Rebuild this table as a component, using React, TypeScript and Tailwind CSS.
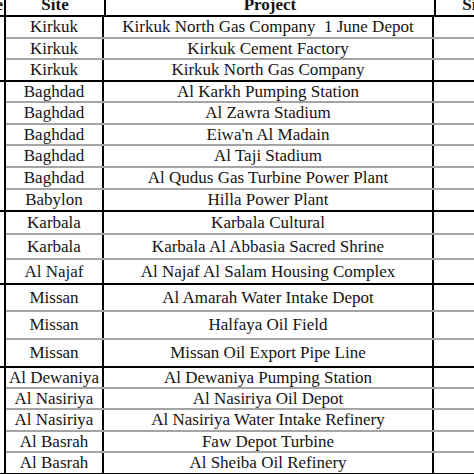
const groups = [
  {
    rows: [
      { site: "Kirkuk", project: "Kirkuk North Gas Company  1 June Depot", h: "h-[22px]" },
      { site: "Kirkuk", project: "Kirkuk Cement Factory", h: "h-[21px]" },
      { site: "Kirkuk", project: "Kirkuk North Gas Company", h: "h-[22px]" },
    ],
  },
  {
    rows: [
      { site: "Baghdad", project: "Al Karkh Pumping Station", h: "h-[21px]" },
      { site: "Baghdad", project: "Al Zawra Stadium", h: "h-[22px]" },
      { site: "Baghdad", project: "Eiwa'n Al Madain", h: "h-[21px]" },
      { site: "Baghdad", project: "Al Taji Stadium", h: "h-[22px]" },
      { site: "Baghdad", project: "Al Qudus Gas Turbine Power Plant", h: "h-[22px]" },
      { site: "Babylon", project: "Hilla Power Plant", h: "h-[22px]" },
    ],
  },
  {
    rows: [
      { site: "Karbala", project: "Karbala Cultural", h: "h-[23px]" },
      { site: "Karbala", project: "Karbala Al Abbasia Sacred Shrine", h: "h-[25px]" },
      { site: "Al Najaf", project: "Al Najaf Al Salam Housing Complex", h: "h-[25px]" },
    ],
  },
  {
    rows: [
      { site: "Missan", project: "Al Amarah Water Intake Depot", h: "h-[27px]" },
      { site: "Missan", project: "Halfaya Oil Field", h: "h-[28px]" },
      { site: "Missan", project: "Missan Oil Export Pipe Line", h: "h-[28px]" },
    ],
  },
  {
    rows: [
      { site: "Al Dewaniya", project: "Al Dewaniya Pumping Station", h: "h-[21px]" },
      { site: "Al Nasiriya", project: "Al Nasiriya Oil Depot", h: "h-[21px]" },
      { site: "Al Nasiriya", project: "Al Nasiriya Water Intake Refinery", h: "h-[22px]" },
      { site: "Al Basrah", project: "Faw Depot Turbine", h: "h-[21px]" },
      { site: "Al Basrah", project: "Al Sheiba Oil Refinery", h: "h-[22px]" },
    ],
  },
]

export default function App() {
  return (
    <div
      className="w-[474px] h-[474px] overflow-hidden bg-white text-[#141414] text-[17px]"
      style={{ fontFamily: '"Liberation Serif", "Times New Roman", serif' }}
    >
      <div className="-ml-[54px] -mt-[5px] w-[570px] flex flex-col">
        {/* header */}
        <div className="flex h-[22px] border-b-2 border-black font-bold">
          <div className="w-[60px] border-r-2 border-black flex items-center justify-end pr-[1px]">Zone</div>
          <div className="w-[100px] border-r-2 border-black flex items-center justify-center">Site</div>
          <div className="w-[330px] border-r-2 border-black flex items-center justify-center">Project</div>
          <div className="w-[80px] flex items-center justify-center">Site</div>
        </div>

        {groups.map((g, gi) => (
          <div key={gi} className="flex">
            <div className="w-[60px] shrink-0 border-r-2 border-b-2 border-black" />
            <div className="flex flex-col">
              {g.rows.map((r, ri) => {
                const last = ri === g.rows.length - 1
                return (
                  <div
                    key={ri}
                    className={`flex border-b-2 ${r.h} ${last ? "border-black" : "border-[#a4a4a4]"}`}
                  >
                    <div className="w-[98px] border-r-2 border-black flex items-center justify-center whitespace-nowrap">
                      {r.site}
                    </div>
                    <div className="w-[330px] border-r-2 border-black flex items-center justify-center whitespace-pre">
                      {r.project}
                    </div>
                    <div className="w-[80px]" />
                  </div>
                )
              })}
            </div>
          </div>
        ))}
      </div>
    </div>
  )
}
